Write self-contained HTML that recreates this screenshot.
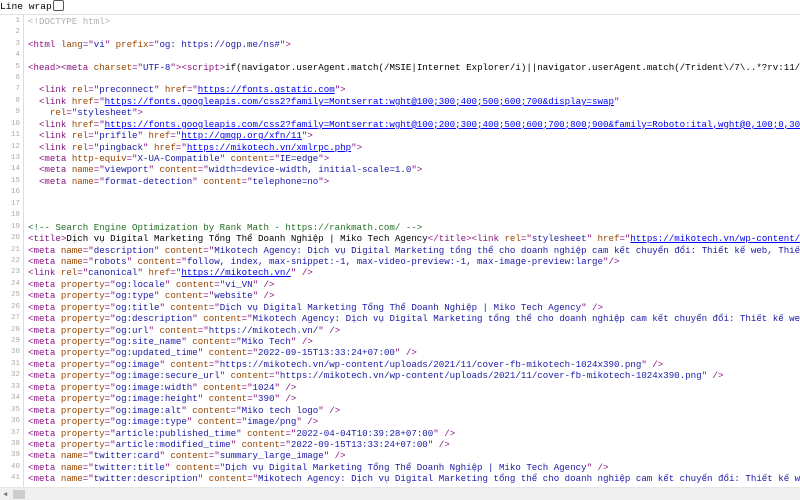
<!DOCTYPE html>
<html><head><meta charset="utf-8">
<style>
html,body{margin:0;padding:0;background:#fff;width:800px;height:500px;overflow:hidden}
body{font-family:"Liberation Mono","DejaVu Sans Mono",monospace;position:relative}
#hdr{position:absolute;left:0;top:0;width:800px;height:14px;border-bottom:1px solid #e2e2e2;font-size:9.6px;line-height:14px;color:#000}
#hdr span.cb{display:inline-block;width:9px;height:9px;border:1px solid #555;border-radius:2px;vertical-align:-2px;margin-left:1px;background:#fff}
#code{position:absolute;left:0;top:15.8px;width:800px}
.r{height:11.45px;line-height:11.45px;white-space:pre;overflow:hidden;font-size:9.15px;position:relative}
.n{position:absolute;left:0;width:20px;text-align:right;color:#aaa;font-size:7.5px}
.x{position:absolute;left:28px;color:#000}
#gut{position:absolute;left:23px;top:15px;width:1px;height:472px;background:#dcdcdc}
.t{color:#881280}.a{color:#994500}.v{color:#1a1aa6}.l{text-decoration:underline;color:#0000ee}
.c{color:#236e25}.d{color:#b0b0b0}
#sb{position:absolute;left:0;top:487px;width:800px;height:13px;background:#f0f0f0;border-top:1px solid #e6e6e6}
#sb .ar{position:absolute;left:3px;top:2px;font-size:7px;color:#777}
#sb .th{position:absolute;left:13px;top:2px;width:12px;height:9px;background:#cdcdcd}
</style></head><body>
<div id="hdr">Line wrap<span class="cb"></span></div>
<div id="gut"></div>
<div id="code">
<div class="r"><span class="n">1</span><span class="x"><span class="d">&lt;!DOCTYPE html&gt;</span></span></div>
<div class="r"><span class="n">2</span></div>
<div class="r"><span class="n">3</span><span class="x"><span class="t">&lt;html </span><span class="a">lang</span><span class="t">="</span><span class="v">vi</span><span class="t">" </span><span class="a">prefix</span><span class="t">="</span><span class="v">og: https://ogp.me/ns#</span><span class="t">"&gt;</span></span></div>
<div class="r"><span class="n">4</span></div>
<div class="r"><span class="n">5</span><span class="x"><span class="t">&lt;head&gt;&lt;meta </span><span class="a">charset</span><span class="t">="</span><span class="v">UTF-8</span><span class="t">"&gt;&lt;script&gt;</span>if(navigator.userAgent.match(/MSIE|Internet Explorer/i)||navigator.userAgent.match(/Trident\/7\..*?rv:11/i)){var href=document.location.href;</span></div>
<div class="r"><span class="n">6</span></div>
<div class="r"><span class="n">7</span><span class="x">  <span class="t">&lt;link </span><span class="a">rel</span><span class="t">="</span><span class="v">preconnect</span><span class="t">" </span><span class="a">href</span><span class="t">="</span><span class="l">https://fonts.gstatic.com</span><span class="t">"&gt;</span></span></div>
<div class="r"><span class="n">8</span><span class="x">  <span class="t">&lt;link </span><span class="a">href</span><span class="t">="</span><span class="l">https://fonts.googleapis.com/css2?family=Montserrat:wght@100;300;400;500;600;700&amp;display=swap</span><span class="t">"</span></span></div>
<div class="r"><span class="n">9</span><span class="x">    <span class="a">rel</span><span class="t">="</span><span class="v">stylesheet</span><span class="t">"&gt;</span></span></div>
<div class="r"><span class="n">10</span><span class="x">  <span class="t">&lt;link </span><span class="a">href</span><span class="t">="</span><span class="l">https://fonts.googleapis.com/css2?family=Montserrat:wght@100;200;300;400;500;600;700;800;900&amp;family=Roboto:ital,wght@0,100;0,300;0,400</span></span></div>
<div class="r"><span class="n">11</span><span class="x">  <span class="t">&lt;link </span><span class="a">rel</span><span class="t">="</span><span class="v">prifile</span><span class="t">" </span><span class="a">href</span><span class="t">="</span><span class="l">http://gmgp.org/xfn/11</span><span class="t">"&gt;</span></span></div>
<div class="r"><span class="n">12</span><span class="x">  <span class="t">&lt;link </span><span class="a">rel</span><span class="t">="</span><span class="v">pingback</span><span class="t">" </span><span class="a">href</span><span class="t">="</span><span class="l">https://mikotech.vn/xmlrpc.php</span><span class="t">"&gt;</span></span></div>
<div class="r"><span class="n">13</span><span class="x">  <span class="t">&lt;meta </span><span class="a">http-equiv</span><span class="t">="</span><span class="v">X-UA-Compatible</span><span class="t">" </span><span class="a">content</span><span class="t">="</span><span class="v">IE=edge</span><span class="t">"&gt;</span></span></div>
<div class="r"><span class="n">14</span><span class="x">  <span class="t">&lt;meta </span><span class="a">name</span><span class="t">="</span><span class="v">viewport</span><span class="t">" </span><span class="a">content</span><span class="t">="</span><span class="v">width=device-width, initial-scale=1.0</span><span class="t">"&gt;</span></span></div>
<div class="r"><span class="n">15</span><span class="x">  <span class="t">&lt;meta </span><span class="a">name</span><span class="t">="</span><span class="v">format-detection</span><span class="t">" </span><span class="a">content</span><span class="t">="</span><span class="v">telephone=no</span><span class="t">"&gt;</span></span></div>
<div class="r"><span class="n">16</span></div>
<div class="r"><span class="n">17</span></div>
<div class="r"><span class="n">18</span></div>
<div class="r"><span class="n">19</span><span class="x"><span class="c">&lt;!-- Search Engine Optimization by Rank Math - https://rankmath.com/ --&gt;</span></span></div>
<div class="r"><span class="n">20</span><span class="x"><span class="t">&lt;title&gt;</span>Dịch vụ Digital Marketing Tổng Thể Doanh Nghiệp | Miko Tech Agency<span class="t">&lt;/title&gt;&lt;link </span><span class="a">rel</span><span class="t">="</span><span class="v">stylesheet</span><span class="t">" </span><span class="a">href</span><span class="t">="</span><span class="l">https://mikotech.vn/wp-content/plugins/</span></span></div>
<div class="r"><span class="n">21</span><span class="x"><span class="t">&lt;meta </span><span class="a">name</span><span class="t">="</span><span class="v">description</span><span class="t">" </span><span class="a">content</span><span class="t">="</span><span class="v">Mikotech Agency: Dịch vụ Digital Marketing tổng thể cho doanh nghiệp cam kết chuyển đổi: Thiết kế web, Thiết kế</span></span></div>
<div class="r"><span class="n">22</span><span class="x"><span class="t">&lt;meta </span><span class="a">name</span><span class="t">="</span><span class="v">robots</span><span class="t">" </span><span class="a">content</span><span class="t">="</span><span class="v">follow, index, max-snippet:-1, max-video-preview:-1, max-image-preview:large</span><span class="t">"/&gt;</span></span></div>
<div class="r"><span class="n">23</span><span class="x"><span class="t">&lt;link </span><span class="a">rel</span><span class="t">="</span><span class="v">canonical</span><span class="t">" </span><span class="a">href</span><span class="t">="</span><span class="l">https://mikotech.vn/</span><span class="t">" /&gt;</span></span></div>
<div class="r"><span class="n">24</span><span class="x"><span class="t">&lt;meta </span><span class="a">property</span><span class="t">="</span><span class="v">og:locale</span><span class="t">" </span><span class="a">content</span><span class="t">="</span><span class="v">vi_VN</span><span class="t">" /&gt;</span></span></div>
<div class="r"><span class="n">25</span><span class="x"><span class="t">&lt;meta </span><span class="a">property</span><span class="t">="</span><span class="v">og:type</span><span class="t">" </span><span class="a">content</span><span class="t">="</span><span class="v">website</span><span class="t">" /&gt;</span></span></div>
<div class="r"><span class="n">26</span><span class="x"><span class="t">&lt;meta </span><span class="a">property</span><span class="t">="</span><span class="v">og:title</span><span class="t">" </span><span class="a">content</span><span class="t">="</span><span class="v">Dịch vụ Digital Marketing Tổng Thể Doanh Nghiệp | Miko Tech Agency</span><span class="t">" /&gt;</span></span></div>
<div class="r"><span class="n">27</span><span class="x"><span class="t">&lt;meta </span><span class="a">property</span><span class="t">="</span><span class="v">og:description</span><span class="t">" </span><span class="a">content</span><span class="t">="</span><span class="v">Mikotech Agency: Dịch vụ Digital Marketing tổng thể cho doanh nghiệp cam kết chuyển đổi: Thiết kế web, Thiết</span></span></div>
<div class="r"><span class="n">28</span><span class="x"><span class="t">&lt;meta </span><span class="a">property</span><span class="t">="</span><span class="v">og:url</span><span class="t">" </span><span class="a">content</span><span class="t">="</span><span class="v">https://mikotech.vn/</span><span class="t">" /&gt;</span></span></div>
<div class="r"><span class="n">29</span><span class="x"><span class="t">&lt;meta </span><span class="a">property</span><span class="t">="</span><span class="v">og:site_name</span><span class="t">" </span><span class="a">content</span><span class="t">="</span><span class="v">Miko Tech</span><span class="t">" /&gt;</span></span></div>
<div class="r"><span class="n">30</span><span class="x"><span class="t">&lt;meta </span><span class="a">property</span><span class="t">="</span><span class="v">og:updated_time</span><span class="t">" </span><span class="a">content</span><span class="t">="</span><span class="v">2022-09-15T13:33:24+07:00</span><span class="t">" /&gt;</span></span></div>
<div class="r"><span class="n">31</span><span class="x"><span class="t">&lt;meta </span><span class="a">property</span><span class="t">="</span><span class="v">og:image</span><span class="t">" </span><span class="a">content</span><span class="t">="</span><span class="v">https://mikotech.vn/wp-content/uploads/2021/11/cover-fb-mikotech-1024x390.png</span><span class="t">" /&gt;</span></span></div>
<div class="r"><span class="n">32</span><span class="x"><span class="t">&lt;meta </span><span class="a">property</span><span class="t">="</span><span class="v">og:image:secure_url</span><span class="t">" </span><span class="a">content</span><span class="t">="</span><span class="v">https://mikotech.vn/wp-content/uploads/2021/11/cover-fb-mikotech-1024x390.png</span><span class="t">" /&gt;</span></span></div>
<div class="r"><span class="n">33</span><span class="x"><span class="t">&lt;meta </span><span class="a">property</span><span class="t">="</span><span class="v">og:image:width</span><span class="t">" </span><span class="a">content</span><span class="t">="</span><span class="v">1024</span><span class="t">" /&gt;</span></span></div>
<div class="r"><span class="n">34</span><span class="x"><span class="t">&lt;meta </span><span class="a">property</span><span class="t">="</span><span class="v">og:image:height</span><span class="t">" </span><span class="a">content</span><span class="t">="</span><span class="v">390</span><span class="t">" /&gt;</span></span></div>
<div class="r"><span class="n">35</span><span class="x"><span class="t">&lt;meta </span><span class="a">property</span><span class="t">="</span><span class="v">og:image:alt</span><span class="t">" </span><span class="a">content</span><span class="t">="</span><span class="v">Miko tech logo</span><span class="t">" /&gt;</span></span></div>
<div class="r"><span class="n">36</span><span class="x"><span class="t">&lt;meta </span><span class="a">property</span><span class="t">="</span><span class="v">og:image:type</span><span class="t">" </span><span class="a">content</span><span class="t">="</span><span class="v">image/png</span><span class="t">" /&gt;</span></span></div>
<div class="r"><span class="n">37</span><span class="x"><span class="t">&lt;meta </span><span class="a">property</span><span class="t">="</span><span class="v">article:published_time</span><span class="t">" </span><span class="a">content</span><span class="t">="</span><span class="v">2022-04-04T10:39:28+07:00</span><span class="t">" /&gt;</span></span></div>
<div class="r"><span class="n">38</span><span class="x"><span class="t">&lt;meta </span><span class="a">property</span><span class="t">="</span><span class="v">article:modified_time</span><span class="t">" </span><span class="a">content</span><span class="t">="</span><span class="v">2022-09-15T13:33:24+07:00</span><span class="t">" /&gt;</span></span></div>
<div class="r"><span class="n">39</span><span class="x"><span class="t">&lt;meta </span><span class="a">name</span><span class="t">="</span><span class="v">twitter:card</span><span class="t">" </span><span class="a">content</span><span class="t">="</span><span class="v">summary_large_image</span><span class="t">" /&gt;</span></span></div>
<div class="r"><span class="n">40</span><span class="x"><span class="t">&lt;meta </span><span class="a">name</span><span class="t">="</span><span class="v">twitter:title</span><span class="t">" </span><span class="a">content</span><span class="t">="</span><span class="v">Dịch vụ Digital Marketing Tổng Thể Doanh Nghiệp | Miko Tech Agency</span><span class="t">" /&gt;</span></span></div>
<div class="r"><span class="n">41</span><span class="x"><span class="t">&lt;meta </span><span class="a">name</span><span class="t">="</span><span class="v">twitter:description</span><span class="t">" </span><span class="a">content</span><span class="t">="</span><span class="v">Mikotech Agency: Dịch vụ Digital Marketing tổng thể cho doanh nghiệp cam kết chuyển đổi: Thiết kế web</span></span></div>
</div>
<div id="sb"><span class="ar">&#9664;</span><span class="th"></span></div>
</body></html>
